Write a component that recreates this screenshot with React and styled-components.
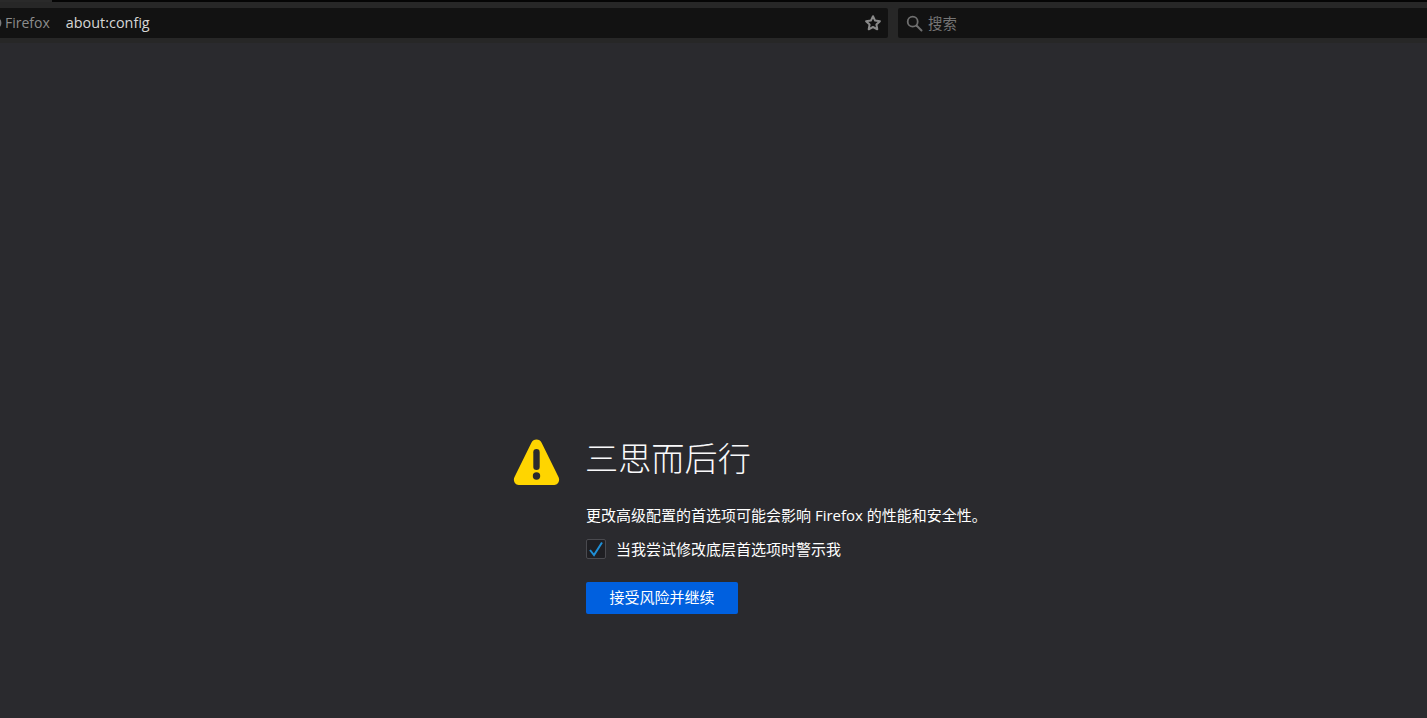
import React from "react";
import styled, { createGlobalStyle } from "styled-components";

const Global = createGlobalStyle`
  html, body { margin: 0; padding: 0; height: 100%; background: #2a2a2e; overflow: hidden; }
  #root { height: 100%; }
`;
const FONT = `"Open Sans", "Noto Sans CJK SC", sans-serif`;

const Page = styled.div`
  width: 1427px; height: 718px; display: flex; flex-direction: column;
  background: #2a2a2e; font-family: ${FONT}; overflow: hidden;
`;
const TabStrip = styled.div`
  height: 2px; background: #050505; display: flex; flex: none;
`;
const TabEdge = styled.div`
  width: 52px; background: #2a2a2a;
`;
const Toolbar = styled.div`
  flex: none; height: 41px; box-sizing: border-box; padding: 6px 0 5px;
  background: #272727; display: flex; gap: 10px;
`;
const UrlBar = styled.div`
  width: 888px; height: 30px; box-sizing: border-box; background: #121212;
  border-radius: 0 2px 2px 0; display: flex; align-items: center; padding-right: 6px;
  overflow: hidden;
`;
const ClippedIcon = styled.svg`
  width: 14px; height: 14px; flex: none; margin-left: -12px;
`;
const Identity = styled.span`
  font-size: 14px; color: #8c8c8c; margin-left: 3px; margin-right: 16px;
  position: relative; top: -1px;
`;
const Url = styled.span`
  font-size: 14.4px; color: #d6d6d6; flex: 1; position: relative; top: -1px;
`;
const SearchBar = styled.div`
  flex: 1; height: 30px; box-sizing: border-box; background: #121212;
  border-radius: 2px 0 0 2px; display: flex; align-items: center; padding-left: 8px; gap: 5px;
`;
const SearchText = styled.span`
  font-size: 14.4px; color: #757575; position: relative; top: -1px;
`;
const Content = styled.main`
  flex: 1; box-sizing: border-box; padding: 395px 0 0 513px; display: flex; gap: 26px;
`;
const WarnIcon = styled.svg`
  width: 47px; height: 47px; flex: none; margin-top: 1px;
`;
const Column = styled.div`
  display: flex; flex-direction: column; align-items: flex-start; padding-top: 1px;
`;
const Title = styled.h1`
  margin: 0 0 0 -1px; font-size: 33.2px; font-weight: 300; line-height: 40px; color: #f9f9fa;
`;
const Description = styled.p`
  margin: 26px 0 0; font-size: 15px; line-height: 20px; color: #fff; white-space: nowrap;
`;
const CheckRow = styled.label`
  margin-top: 14px; display: flex; align-items: center; gap: 10px;
  font-size: 15px; line-height: 20px; color: #fff;
`;
const CheckBox = styled.span`
  width: 20px; height: 20px; box-sizing: border-box; background: #1f1f23;
  border: 1px solid #4a4a4f; border-radius: 2px; display: flex;
  align-items: center; justify-content: center;
`;
const Primary = styled.button`
  margin-top: 23px; width: 152px; height: 32px; border: 0; border-radius: 2px;
  background: #0060df; color: #fff; font-family: ${FONT}; font-size: 15px; padding: 0 0 3px;
`;

export default function App() {
  return (
    <Page>
      <Global />
      <TabStrip><TabEdge /></TabStrip>
      <Toolbar>
        <UrlBar>
          <ClippedIcon viewBox="0 0 14 14" fill="none">
            <circle cx="7" cy="7" r="5.500" stroke="#7a7a7a" strokeWidth="1.800" />
          </ClippedIcon>
          <Identity>Firefox</Identity>
          <Url>about:config</Url>
          <svg width="18" height="18" viewBox="0 0 18 18" fill="none">
            <path d="M9 2.200l2.100 4.400 4.800.6-3.500 3.300.9 4.800L9 13l-4.300 2.300.9-4.800L2.100 7.200l4.800-.6z" stroke="#8a8a8a" strokeWidth="2" strokeLinejoin="round" />
          </svg>
        </UrlBar>
        <SearchBar>
          <svg width="17" height="17" viewBox="0 0 17 17" fill="none">
            <circle cx="6.700" cy="6.700" r="5" stroke="#6f6f6f" strokeWidth="1.800" />
            <path d="M10.500 10.500l5 5" stroke="#6f6f6f" strokeWidth="2" strokeLinecap="round" />
          </svg>
          <SearchText>搜索</SearchText>
        </SearchBar>
      </Toolbar>
      <Content>
        <WarnIcon viewBox="0 0 47 47">
          <path d="M23.500 0.500c2.300 0 4 1.200 5.100 3.200l17 34.500c1.600 3.400-.6 7.800-4.300 7.800H5.700C2 46-.2 41.600 1.400 38.200l17-34.500c1.100-2 2.800-3.200 5.100-3.200z" fill="#ffd500" />
          <rect x="20.300" y="10" width="6.400" height="21" rx="3.200" fill="#2a2a2e" />
          <circle cx="23.500" cy="37" r="3.700" fill="#2a2a2e" />
        </WarnIcon>
        <Column>
          <Title>三思而后行</Title>
          <Description>更改高级配置的首选项可能会影响 Firefox 的性能和安全性。</Description>
          <CheckRow>
            <CheckBox>
              <svg width="16" height="16" viewBox="0 0 16 16" fill="none">
                <path d="M2 9l4 5L14 1.500" stroke="#1f8fd6" strokeWidth="2" />
              </svg>
            </CheckBox>
            当我尝试修改底层首选项时警示我
          </CheckRow>
          <Primary>接受风险并继续</Primary>
        </Column>
      </Content>
    </Page>
  );
}
